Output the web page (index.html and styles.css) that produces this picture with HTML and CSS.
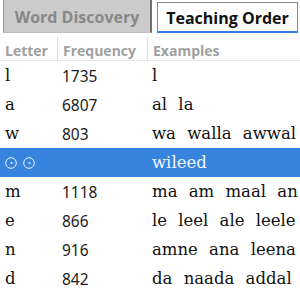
FILE: index.html
```html
<!DOCTYPE html>
<html>
<head>
<meta charset="utf-8">
<link rel="stylesheet" href="styles.css">
</head>
<body>
<div class="tabs">
  <div class="tab tab-inactive">Word Discovery</div>
  <div class="tab tab-active">Teaching Order</div>
</div>
<div class="table">
  <div class="row head">
    <div class="cell">Letter</div>
    <div class="cell sep">Frequency</div>
    <div class="cell sep">Examples</div>
  </div>
  <div class="row"><div class="cell serif">l</div><div class="cell num">1735</div><div class="cell serif">l</div></div>
  <div class="row"><div class="cell serif">a</div><div class="cell num">6807</div><div class="cell serif">al la</div></div>
  <div class="row"><div class="cell serif">w</div><div class="cell num">803</div><div class="cell serif">wa walla awwal</div></div>
  <div class="row selected">
    <div class="cell">
      <svg class="dots" width="34" height="14" viewBox="0 0 34 14">
        <circle cx="6" cy="7" r="5.3" fill="none" stroke="#eef3fb" stroke-width="1"/>
        <circle cx="6.5" cy="7" r="1" fill="#eef3fb"/>
        <circle cx="24" cy="7" r="5.3" fill="none" stroke="#eef3fb" stroke-width="1"/>
        <circle cx="24.5" cy="7" r="1" fill="#eef3fb"/>
      </svg>
    </div>
    <div class="cell num"></div>
    <div class="cell serif">wileed</div>
  </div>
  <div class="row"><div class="cell serif">m</div><div class="cell num">1118</div><div class="cell serif">ma am maal an</div></div>
  <div class="row"><div class="cell serif">e</div><div class="cell num">866</div><div class="cell serif">le leel ale leele</div></div>
  <div class="row"><div class="cell serif">n</div><div class="cell num">916</div><div class="cell serif">amne ana leena</div></div>
  <div class="row"><div class="cell serif">d</div><div class="cell num">842</div><div class="cell serif">da naada addal</div></div>
</div>
</body>
</html>
```
FILE: styles.css
```css
html, body {
  margin: 0;
  padding: 0;
  background: #ffffff;
  overflow: hidden;
}
body {
  width: 300px;
  height: 300px;
  font-family: "Open Sans", sans-serif;
}
.tabs {
  display: flex;
  align-items: flex-end;
  height: 33px;
}
.tab {
  box-sizing: border-box;
  font-weight: 700;
  font-size: 16px;
  display: flex;
  align-items: center;
  justify-content: center;
  white-space: nowrap;
}
.tab-inactive {
  margin-left: 3px;
  width: 149px;
  height: 33px;
  background: #cbcbcb;
  color: #888888;
  border-left: 1px solid #9a9a9a;
  border-right: 2px solid #707070;
  border-bottom: 1px solid #bdbdbd;
  padding-top: 2px;
}
.tab-active {
  margin-left: 5px;
  width: 141px;
  height: 31px;
  background: #ffffff;
  color: #111111;
  border: 1px solid #8a8a8a;
  border-bottom: 2px solid #2f7fe0;
  padding-top: 1px;
}
.table {
  display: flex;
  flex-direction: column;
}
.row {
  display: grid;
  grid-template-columns: 57px 90px 1fr;
  height: 29px;
  align-items: center;
  white-space: nowrap;
  overflow: hidden;
}
.row.head {
  align-items: stretch;
  border-bottom: 1px solid #e6e6e6;
  box-sizing: border-box;
  height: 28px;
}
.head .cell {
  margin-top: 4px;
  padding-top: 3px;
  font-weight: 700;
  font-size: 14px;
  color: #a0a0a0;
  display: flex;
  align-items: center;
  padding-left: 5px;
}
.head .cell.sep {
  border-left: 1px solid #dedede;
}
.cell {
  padding-left: 5px;
  overflow: hidden;
}
.serif {
  font-family: "DejaVu Serif", serif;
  font-size: 16.5px;
  color: #111111;
  word-spacing: 6px;
}
.row .num {
  font-family: "Noto Sans", sans-serif;
  font-size: 15.5px;
  line-height: 20px;
  color: #1c1c1c;
  padding-top: 1px;
}
.selected {
  background: #3784df;
}
.selected .serif {
  color: #f2f6fd;
}
.dots {
  display: block;
}
```
